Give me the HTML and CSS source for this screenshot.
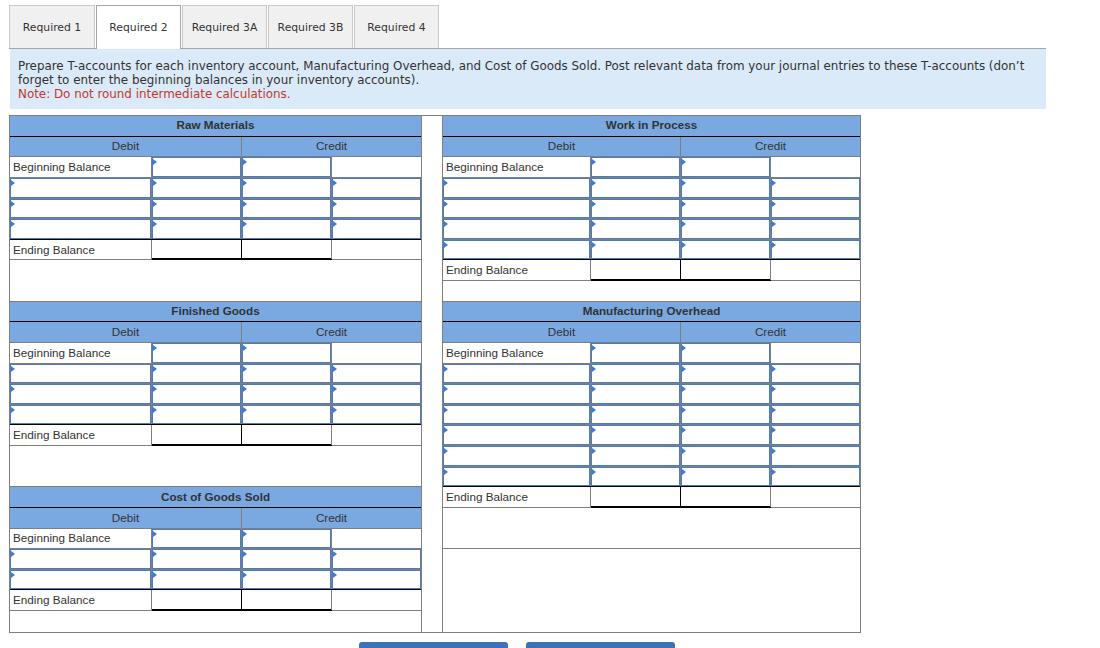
FILE: index.html
```html
<!DOCTYPE html>
<html lang="en">
<head>
<meta charset="utf-8">
<title>T-accounts</title>
<link rel="stylesheet" href="styles.css">
</head>
<body>
<div class="page">
  <nav class="tabs">
    <div class="tab first">Required 1</div>
    <div class="tab active">Required 2</div>
    <div class="tab">Required 3A</div>
    <div class="tab">Required 3B</div>
    <div class="tab">Required 4</div>
  </nav>

  <div class="panel">
    <p>Prepare T-accounts for each inventory account, Manufacturing Overhead, and Cost of Goods Sold. Post relevant data from your journal entries to these T-accounts (don’t forget to enter the beginning balances in your inventory accounts).</p>
    <p class="note">Note: Do not round intermediate calculations.</p>
  </div>

  <div class="ledger">
    <div class="col left">
      <div class="r title">Raw Materials</div>
      <div class="r dc"><div class="c">Debit</div><div class="c">Credit</div></div>
      <div class="r"><div class="c lbl">Beginning Balance</div><div class="c"><span class="in"></span></div><div class="c"><span class="in"></span></div><div class="c"></div></div>
      <div class="r"><div class="c"><span class="in"></span></div><div class="c"><span class="in"></span></div><div class="c"><span class="in"></span></div><div class="c"><span class="in"></span></div></div>
      <div class="r"><div class="c"><span class="in"></span></div><div class="c"><span class="in"></span></div><div class="c"><span class="in"></span></div><div class="c"><span class="in"></span></div></div>
      <div class="r pre"><div class="c"><span class="in"></span></div><div class="c"><span class="in"></span></div><div class="c"><span class="in"></span></div><div class="c"><span class="in"></span></div></div>
      <div class="r eb"><div class="c lbl">Ending Balance</div><div class="c"></div><div class="c"></div><div class="c"></div></div>
      <div class="r blank b2"></div>

      <div class="r title">Finished Goods</div>
      <div class="r dc"><div class="c">Debit</div><div class="c">Credit</div></div>
      <div class="r"><div class="c lbl">Beginning Balance</div><div class="c"><span class="in"></span></div><div class="c"><span class="in"></span></div><div class="c"></div></div>
      <div class="r"><div class="c"><span class="in"></span></div><div class="c"><span class="in"></span></div><div class="c"><span class="in"></span></div><div class="c"><span class="in"></span></div></div>
      <div class="r"><div class="c"><span class="in"></span></div><div class="c"><span class="in"></span></div><div class="c"><span class="in"></span></div><div class="c"><span class="in"></span></div></div>
      <div class="r pre"><div class="c"><span class="in"></span></div><div class="c"><span class="in"></span></div><div class="c"><span class="in"></span></div><div class="c"><span class="in"></span></div></div>
      <div class="r eb"><div class="c lbl">Ending Balance</div><div class="c"></div><div class="c"></div><div class="c"></div></div>
      <div class="r blank b2"></div>

      <div class="r title">Cost of Goods Sold</div>
      <div class="r dc"><div class="c">Debit</div><div class="c">Credit</div></div>
      <div class="r"><div class="c lbl">Beginning Balance</div><div class="c"><span class="in"></span></div><div class="c"><span class="in"></span></div><div class="c"></div></div>
      <div class="r"><div class="c"><span class="in"></span></div><div class="c"><span class="in"></span></div><div class="c"><span class="in"></span></div><div class="c"><span class="in"></span></div></div>
      <div class="r pre"><div class="c"><span class="in"></span></div><div class="c"><span class="in"></span></div><div class="c"><span class="in"></span></div><div class="c"><span class="in"></span></div></div>
      <div class="r eb"><div class="c lbl">Ending Balance</div><div class="c"></div><div class="c"></div><div class="c"></div></div>
      <div class="r blank"></div>
    </div>

    <div class="gap"></div>

    <div class="col right">
      <div class="r title">Work in Process</div>
      <div class="r dc"><div class="c">Debit</div><div class="c">Credit</div></div>
      <div class="r"><div class="c lbl">Beginning Balance</div><div class="c"><span class="in"></span></div><div class="c"><span class="in"></span></div><div class="c"></div></div>
      <div class="r"><div class="c"><span class="in"></span></div><div class="c"><span class="in"></span></div><div class="c"><span class="in"></span></div><div class="c"><span class="in"></span></div></div>
      <div class="r"><div class="c"><span class="in"></span></div><div class="c"><span class="in"></span></div><div class="c"><span class="in"></span></div><div class="c"><span class="in"></span></div></div>
      <div class="r"><div class="c"><span class="in"></span></div><div class="c"><span class="in"></span></div><div class="c"><span class="in"></span></div><div class="c"><span class="in"></span></div></div>
      <div class="r pre"><div class="c"><span class="in"></span></div><div class="c"><span class="in"></span></div><div class="c"><span class="in"></span></div><div class="c"><span class="in"></span></div></div>
      <div class="r eb"><div class="c lbl">Ending Balance</div><div class="c"></div><div class="c"></div><div class="c"></div></div>
      <div class="r blank"></div>

      <div class="r title">Manufacturing Overhead</div>
      <div class="r dc"><div class="c">Debit</div><div class="c">Credit</div></div>
      <div class="r"><div class="c lbl">Beginning Balance</div><div class="c"><span class="in"></span></div><div class="c"><span class="in"></span></div><div class="c"></div></div>
      <div class="r"><div class="c"><span class="in"></span></div><div class="c"><span class="in"></span></div><div class="c"><span class="in"></span></div><div class="c"><span class="in"></span></div></div>
      <div class="r"><div class="c"><span class="in"></span></div><div class="c"><span class="in"></span></div><div class="c"><span class="in"></span></div><div class="c"><span class="in"></span></div></div>
      <div class="r"><div class="c"><span class="in"></span></div><div class="c"><span class="in"></span></div><div class="c"><span class="in"></span></div><div class="c"><span class="in"></span></div></div>
      <div class="r"><div class="c"><span class="in"></span></div><div class="c"><span class="in"></span></div><div class="c"><span class="in"></span></div><div class="c"><span class="in"></span></div></div>
      <div class="r"><div class="c"><span class="in"></span></div><div class="c"><span class="in"></span></div><div class="c"><span class="in"></span></div><div class="c"><span class="in"></span></div></div>
      <div class="r pre"><div class="c"><span class="in"></span></div><div class="c"><span class="in"></span></div><div class="c"><span class="in"></span></div><div class="c"><span class="in"></span></div></div>
      <div class="r eb"><div class="c lbl">Ending Balance</div><div class="c"></div><div class="c"></div><div class="c"></div></div>
      <div class="r blank b2"></div>
      <div class="r blank b4"></div>
    </div>
  </div>

  <div class="actions">
    <button class="btn" type="button"></button>
    <button class="btn" type="button"></button>
  </div>
</div>
</body>
</html>
```

FILE: styles.css
```css
* {
  box-sizing: border-box;
}

body {
  margin: 0;
  background: #ffffff;
  color: #333333;
}

.page {
  padding: 5px 0 0 9px;
}

/* Tabs */
.tabs {
  display: flex;
  align-items: flex-start;
  gap: 1px;
  width: 1037px;
  height: 44px;
  border-bottom: 1px solid #a6a6a6;
  font: 10.8px "DejaVu Sans", Verdana, sans-serif;
}

.tab {
  width: 85px;
  height: 43px;
  display: flex;
  align-items: center;
  justify-content: center;
  background: #f0f0f0;
  border: 1px solid #c9c9c9;
  border-bottom: 0;
  color: #333333;
}

.tab.first {
  width: 86px;
}

.tab.active {
  background: #ffffff;
  border-color: #a6a6a6;
  height: 44px;
  position: relative;
  z-index: 1;
}

/* Instruction panel */
.panel {
  margin-left: 1px;
  width: 1036px;
  height: 60px;
  background: #dbeaf8;
  padding: 10px 8px 0 8px;
  font: 11.9px/14px "DejaVu Sans", Verdana, sans-serif;
  color: #333333;
}

.panel p {
  margin: 0;
}

.panel .note {
  color: #c0392b;
}

/* Ledger */
.ledger {
  --rh: 20.64px;
  margin-top: 6px;
  display: flex;
  width: 852px;
  border: 1px solid #7f7f7f;
  font: 11.7px "Liberation Sans", Arial, sans-serif;
  color: #333333;
  background: #ffffff;
}

.col.left {
  --cols: 142px 90px 90px 89px;
  width: 412px;
  border-right: 1px solid #7f7f7f;
}

.col.right {
  --cols: 148px 90px 90px 89px;
  width: 417px;
}

.gap {
  width: 21px;
  border-right: 1px solid #7f7f7f;
}

.r {
  display: grid;
  grid-template-columns: var(--cols);
  height: var(--rh);
  border-bottom: 1px solid #7f7f7f;
}

.col > .r:last-child {
  border-bottom: 0;
}

.c {
  border-right: 1px solid #7f7f7f;
  display: flex;
  align-items: center;
  min-width: 0;
  padding-bottom: 1px;
}

.c:last-child {
  border-right: 0;
}

.lbl {
  padding-left: 3px;
}

.title {
  display: flex;
  align-items: center;
  justify-content: center;
  background: #7aa8e1;
  border-bottom-color: #000000;
  font-weight: bold;
  padding-bottom: 2px;
}

.dc {
  background: #7aa8e1;
}

.dc .c {
  grid-column: span 2;
  justify-content: center;
}

.pre {
  border-bottom-color: #000000;
}

.eb .c:nth-child(2) {
  border-right-color: #000000;
}

.eb .c:nth-child(2),
.eb .c:nth-child(3) {
  box-shadow: 0 1px 0 #000000, inset 0 -1px 0 #000000;
}

.b2 {
  height: calc(var(--rh) * 2);
}

.b4 {
  height: calc(var(--rh) * 4);
}

/* Input boxes */
.r .c:has(.in) {
  padding-bottom: 0;
}

.in {
  display: block;
  width: 100%;
  height: 100%;
  border: 1px solid #4c7bbf;
  background: #ffffff;
  position: relative;
}

.in::before {
  content: "";
  position: absolute;
  left: 0;
  top: 1px;
  border-left: 4px solid #3b7bd6;
  border-top: 3px solid transparent;
  border-bottom: 3px solid transparent;
}

/* Bottom buttons */
.actions {
  display: flex;
  gap: 18px;
  margin: 9px 0 0 350px;
}

.btn {
  width: 149px;
  height: 30px;
  border: 0;
  border-radius: 3px;
  background: #3e72b6;
  padding: 0;
}
```
